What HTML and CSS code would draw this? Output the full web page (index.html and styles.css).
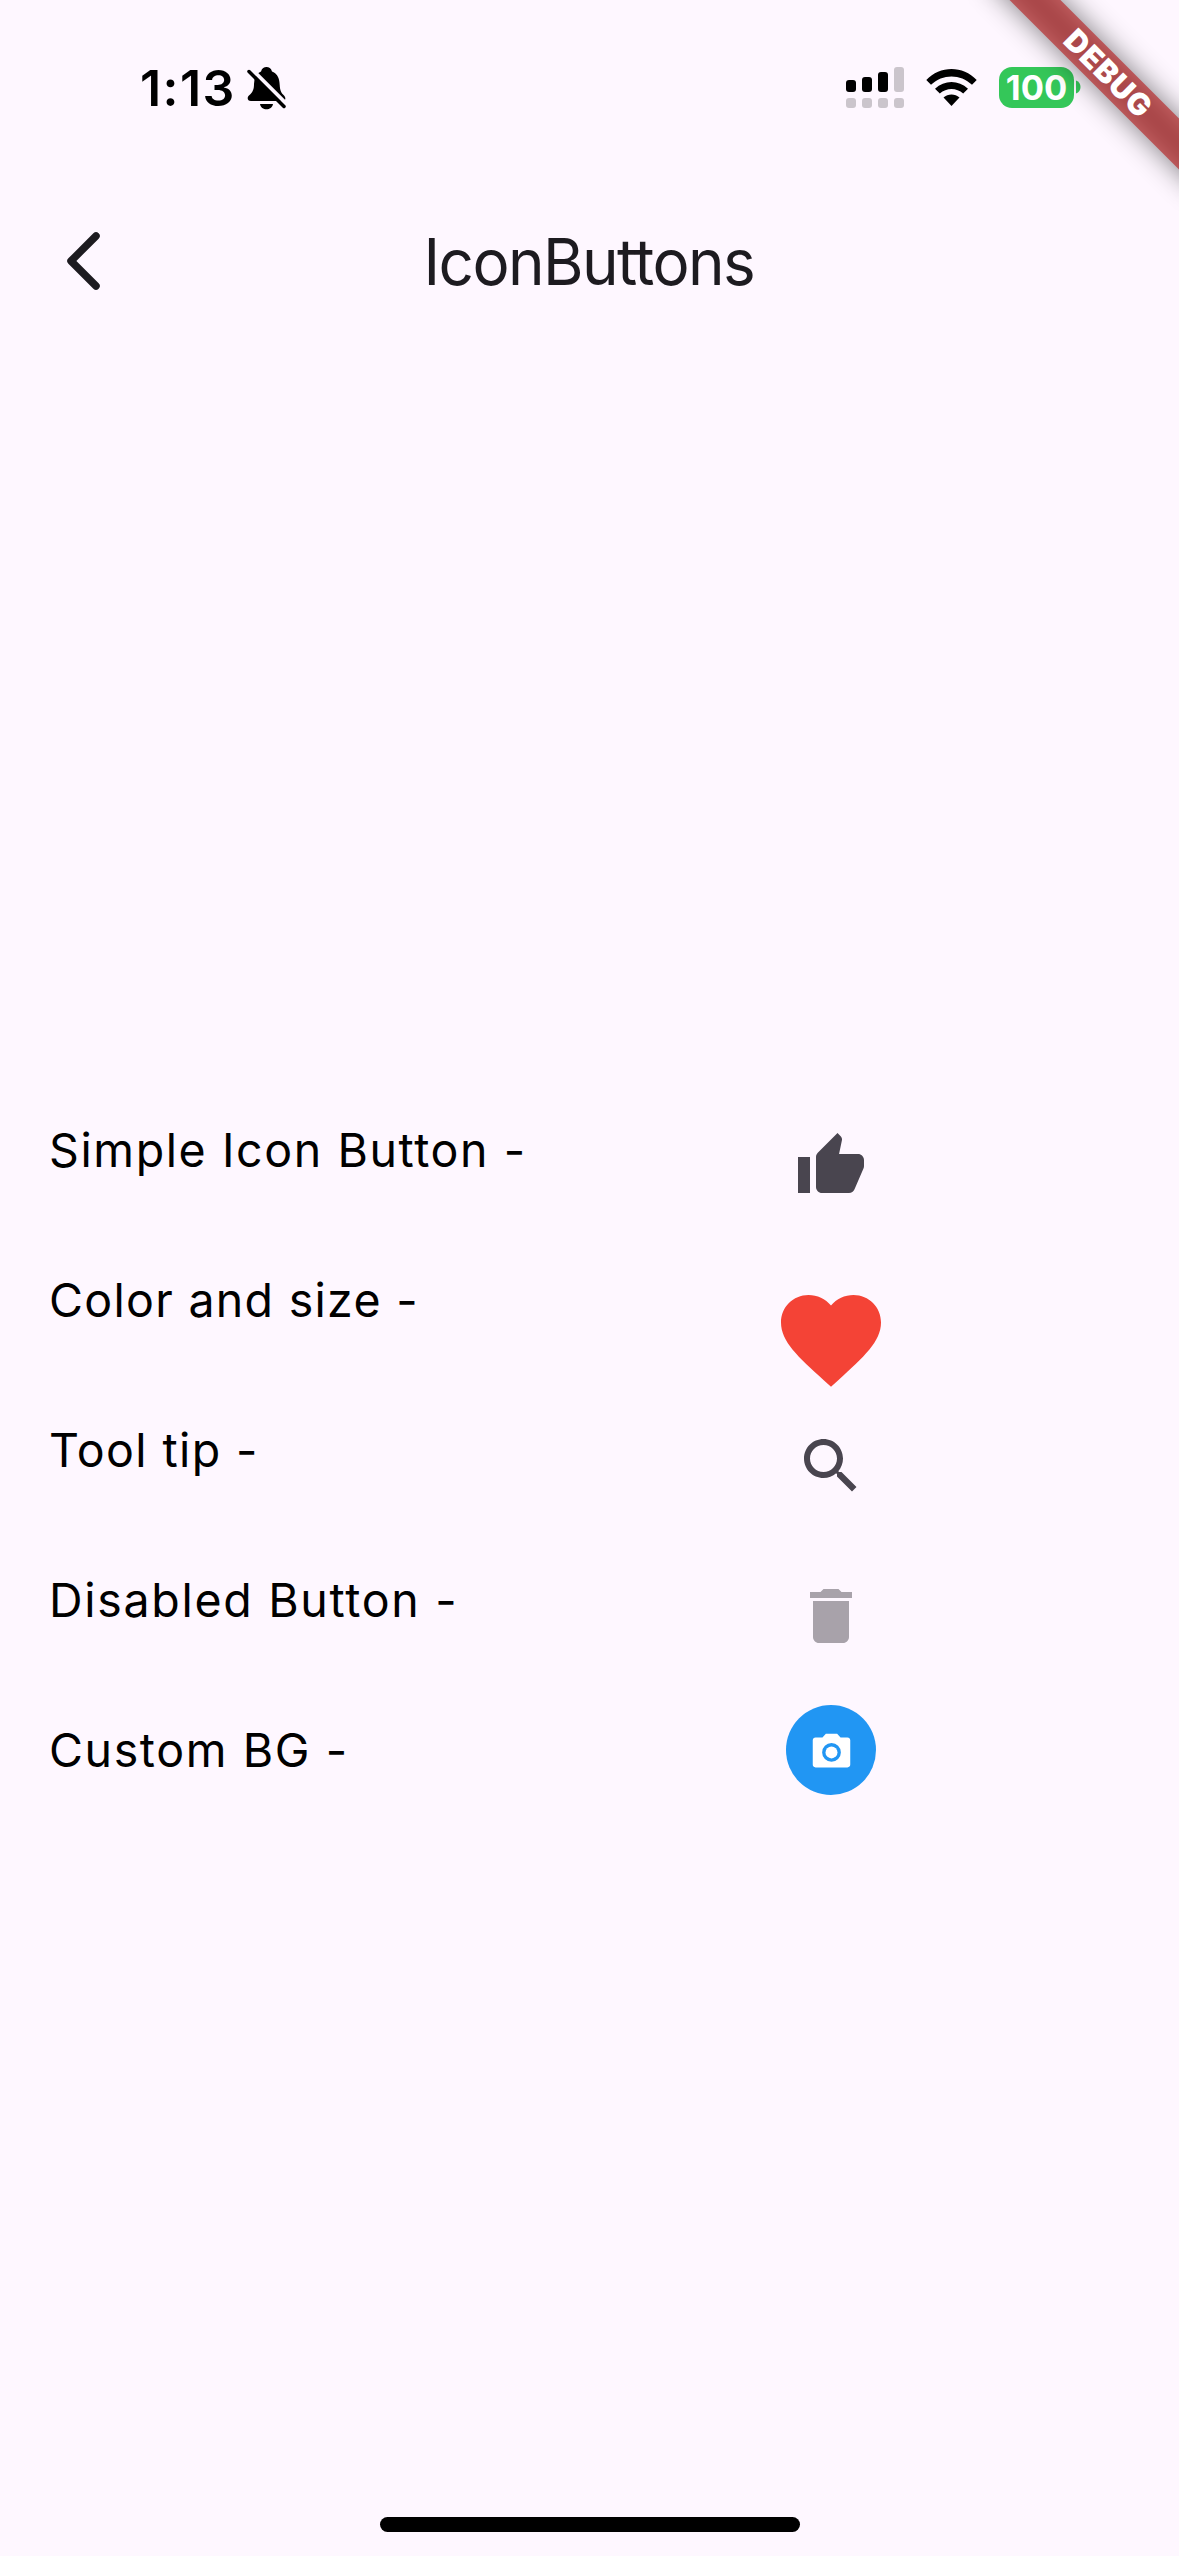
FILE: index.html
```html
<!DOCTYPE html>
<html lang="en">
<head>
<meta charset="utf-8">
<title>IconButtons</title>
<link rel="stylesheet" href="styles.css">
</head>
<body>
<div class="screen">
  <header class="status">
    <span class="time">1:13</span>
    <svg class="bell" viewBox="0 0 40 44" width="40" height="44">
      <path d="M7.500 12.500C8.500 9 10 6.500 14 4.500C15 1 17 0 19.500 0S24 1 25 4.500C31 7 32.500 12 32.700 18C33 24 34.500 26 37 28.500C39 30.500 39 34 35.500 34H4C0 34 0 30 2 28.500C6 25 7 22 7 17ZM13 37H26C25 44 14 44 13 37Z"/>
      <path class="cut" d="M3.500 1L40.500 38"/>
      <path class="slash" d="M2 4.500L37 39.500"/>
    </svg>
    <svg class="signal" viewBox="0 0 58 41" width="58" height="41">
      <rect x="0" y="13" width="10" height="12" rx="3"/>
      <rect x="16" y="10" width="10" height="15" rx="3"/>
      <rect x="32" y="5" width="10" height="20" rx="3"/>
      <g class="dim"><rect x="48" y="0" width="10" height="25" rx="3"/>
      <rect x="0" y="31" width="10" height="10" rx="3"/><rect x="16" y="31" width="10" height="10" rx="3"/><rect x="32" y="31" width="10" height="10" rx="3"/><rect x="48" y="31" width="10" height="10" rx="3"/></g>
    </svg>
    <svg class="wifi" viewBox="0 0 51 38" width="51" height="38">
      <path d="M0.300 11C14-3.600 37-3.600 50.700 11L46 15.800C34.500 4.600 16.500 4.600 5 15.800Z"/>
      <path d="M9 19.700C18.500 10.700 32.500 10.700 42 19.700L37.200 24.500C30.500 18.500 20.500 18.500 13.800 24.500Z"/>
      <path d="M17.500 28.600C22 24.500 29 24.500 33.500 28.600L25.500 37Z"/>
    </svg>
    <span class="battery">100</span><svg class="nub" viewBox="0 0 5 14" width="5" height="14"><path d="M0 0.500C6 2 6 12 0 13.500Z"/></svg>
  </header>
  <nav class="appbar">
    <svg class="back" viewBox="0 0 40 60" width="40" height="60"><path d="M31 5L6 30L31 55"/></svg>
    <h1 class="title">IconButtons</h1>
  </nav>
  <main class="list">
    <div class="row"><span class="label simple">Simple Icon Button -</span>
      <span class="button"><svg class="icon" viewBox="0 0 24 24"><path d="M1 21h4V9H1v12zm22-11c0-1.100-.9-2-2-2h-6.310l.95-4.570.03-.32c0-.41-.17-.79-.44-1.060L14.170 1 7.590 7.590C7.220 7.950 7 8.450 7 9v10c0 1.100.9 2 2 2h9c.83 0 1.540-.5 1.840-1.220l3.020-7.050c.09-.23.14-.47.14-.73v-2z"/></svg></span></div>
    <div class="row"><span class="label color">Color and size -</span>
      <span class="button large"><svg class="icon heart" viewBox="0 0 24 24"><path d="M12 21.350l-1.450-1.320C5.400 15.360 2 12.280 2 8.500 2 5.420 4.420 3 7.500 3c1.740 0 3.410.81 4.500 2.090C13.090 3.810 14.760 3 16.500 3 19.580 3 22 5.420 22 8.500c0 3.780-3.400 6.860-8.550 11.540L12 21.350z"/></svg></span></div>
    <div class="row"><span class="label tip">Tool tip -</span>
      <span class="button"><svg class="icon" viewBox="0 0 24 24"><path d="M15.500 14h-.79l-.28-.27C15.410 12.590 16 11.110 16 9.500 16 5.910 13.090 3 9.500 3S3 5.910 3 9.500 5.910 16 9.500 16c1.610 0 3.090-.59 4.230-1.570l.27.28v.79l5 4.990L20.490 19l-4.990-5zm-6 0C7.010 14 5 11.990 5 9.500S7.010 5 9.500 5 14 7.010 14 9.500 11.990 14 9.500 14z"/></svg></span></div>
    <div class="row"><span class="label off">Disabled Button -</span>
      <span class="button"><svg class="icon disabled" viewBox="0 0 24 24"><path d="M6 19c0 1.100.9 2 2 2h8c1.100 0 2-.9 2-2V7H6v12zM19 4h-3.500l-1-1h-5l-1 1H5v2h14V4z"/></svg></span></div>
    <div class="row"><span class="label custom">Custom BG -</span>
      <span class="button filled"><svg class="icon camera" viewBox="0 0 24 24"><circle cx="12" cy="13" r="3.200"/><path fill-rule="evenodd" d="M9 3L7.170 5H3.500C2.600 5 2 5.600 2 6.500V19.500C2 20.400 2.600 21 3.500 21H20.500C21.400 21 22 20.400 22 19.500V6.500C22 5.600 21.400 5 20.500 5H16.830L15 3ZM12 18a5 5 0 1 1 0-10 5 5 0 0 1 0 10Z"/></svg></span></div>
  </main>
  <div class="home"></div>
  <div class="ribbon"><div class="shade"></div><div class="band">DEBUG</div></div>
</div>
</body>
</html>
```
FILE: styles.css
```css
* { box-sizing: border-box; }
body { margin: 0; background: #fef7ff; font-family: Inter, "Liberation Sans", sans-serif; }
svg { display: block; flex: none; }
.screen { position: relative; width: 1179px; height: 2556px; overflow: hidden; display: flex; flex-direction: column; background: #fef7ff; color: #000; }
.status { display: flex; height: 177px; padding: 67px 0 0 140px; align-items: flex-start; }
.time { width: 106px; font-size: 50px; line-height: 41px; font-weight: 600; letter-spacing: 1.400px; white-space: nowrap; margin-top: 1px; }
.bell { margin-left: 1px; }
.cut { stroke: #fef7ff; stroke-width: 4; fill: none; }
.slash { stroke: #000; stroke-width: 3.500; stroke-linecap: round; fill: none; }
.signal { margin-left: 559px; }
.dim { fill: #cbc5cc; }
.wifi { margin: 2px 0 0 22px; }
.battery { width: 75px; height: 41px; margin-left: 22px; border-radius: 13px; background: #34c759; color: #fff; font-size: 34.500px; line-height: 41px; font-weight: 700; text-align: center; }
.nub { margin: 13px 0 0 2px; fill: #34c759; }
.appbar { display: flex; height: 168px; align-items: center; justify-content: center; padding-right: 65px; }
.back { margin-right: auto; margin-left: 65px; fill: none; stroke: #1d1b20; stroke-width: 7.500; stroke-linecap: round; stroke-linejoin: round; }
.title { margin: 2px auto 0 -42px; font-size: 64px; font-weight: 400; line-height: 84px; letter-spacing: -1.600px; color: #1d1b20; transform: scaleX(.968); }
.list { margin-top: 749px; }
.row { display: grid; grid-template-columns: 711px 144px; column-gap: 0; height: 150px; padding-left: 48px; }
.label { padding: 20px 0 0 1px; font-size: 46.500px; line-height: 72px; letter-spacing: 1.600px; white-space: nowrap; }
.color { letter-spacing: 1.300px; }
.tip { letter-spacing: 1.400px; }
.off { letter-spacing: 1.700px; }
.button { display: flex; width: 144px; height: 144px; align-items: center; justify-content: center; }
.button.large { height: 192px; }
.icon { width: 72px; height: 72px; fill: #49454f; }
.heart { width: 120px; height: 120px; fill: #f44336; }
.disabled { fill: #a8a2aa; }
.button.filled { width: 90px; height: 90px; margin: 11px 27px; border-radius: 50%; background: #2196f3; }
.camera { width: 45px; height: 45px; fill: #fff; }
.home { width: 420px; height: 15px; margin: auto auto 24px 380px; border-radius: 8px; background: #000; }
.ribbon { position: absolute; left: 957px; top: 54px; width: 300px; height: 36px; transform: rotate(45deg); }
.shade { position: absolute; inset: 0; background: rgba(0, 0, 0, .5); filter: blur(14px); }
.band { position: relative; height: 36px; padding-left: 4px; background: rgba(183, 28, 28, .627); color: #fff; font-size: 30.500px; line-height: 35px; font-weight: 900; letter-spacing: .8px; text-align: center; }
```
